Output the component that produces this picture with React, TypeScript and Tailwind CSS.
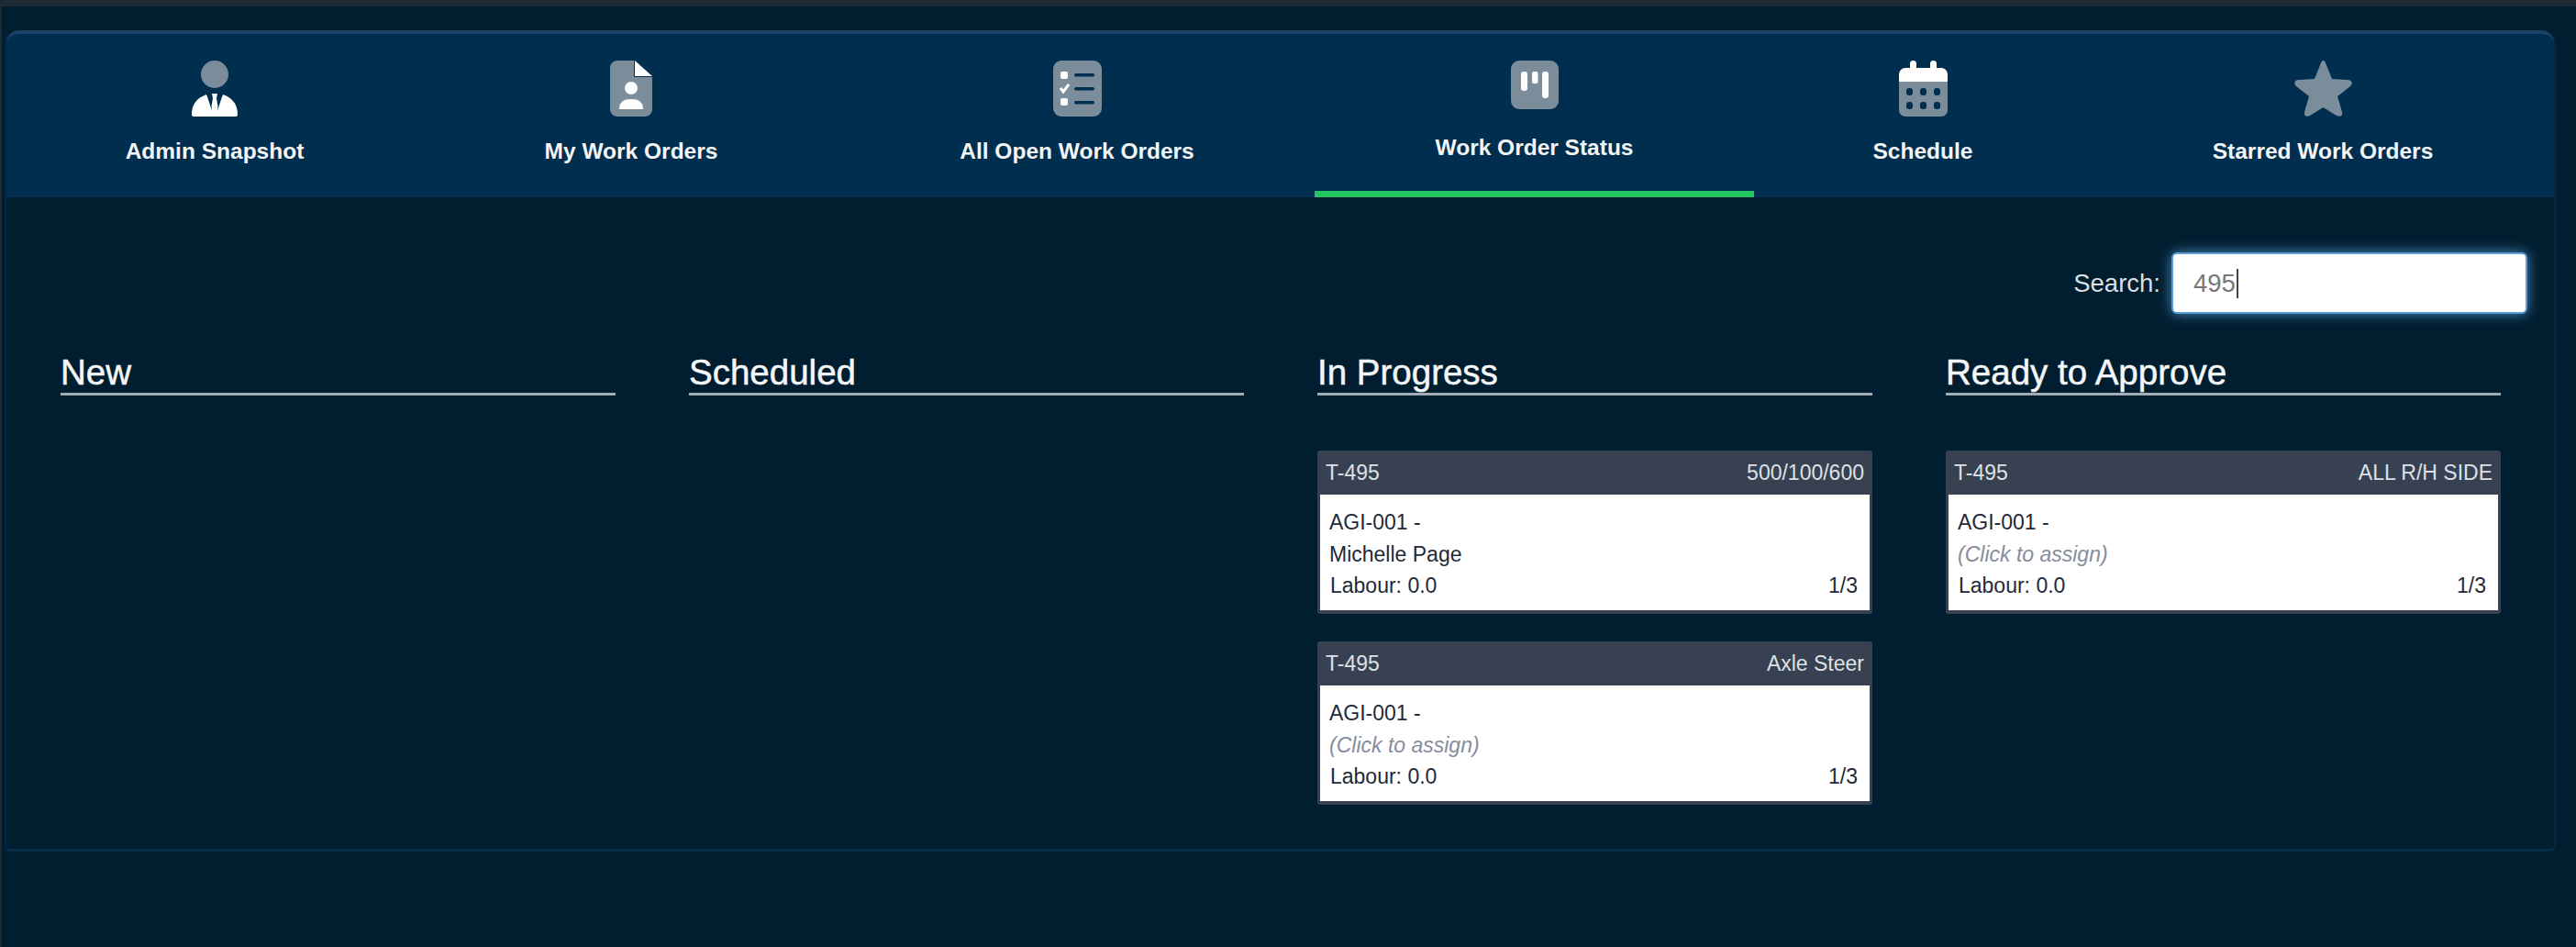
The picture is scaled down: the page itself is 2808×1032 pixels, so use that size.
import React from 'react';

const SLATE = '#7b8c9b';
const NAVY = '#002e4e';

const AdminIcon = () => (
  <svg width="54" height="61" viewBox="0 0 54 61">
    <circle cx="27" cy="15" r="15" fill={SLATE} />
    <path d="M2 59 C2 48 7 41 18 37 L25 52 L25 37 L29 37 L29 52 L36 37 C47 41 52 48 52 59 Q52 61 50 61 H4 Q2 61 2 59 Z" fill="#fff" />
    <path d="M24 36 H30 L29 41 L31 53 L27 58 L23 53 L25 41 Z" fill="#fff" />
    <path d="M18 36 L24 55 L22 36 Z M36 36 L30 55 L32 36 Z" fill={NAVY} />
  </svg>
);

const DocIcon = () => (
  <svg width="46" height="61" viewBox="0 0 46 61">
    <path d="M8 0 H26 V18 H46 V53 A8 8 0 0 1 38 61 H8 A8 8 0 0 1 0 53 V8 A8 8 0 0 1 8 0 Z" fill={SLATE} />
    <path d="M27 0 L46 17 H27 Z" fill="#fff" />
    <circle cx="23" cy="30" r="7" fill="#fff" />
    <path d="M10 53 C10 45 15 42 23 42 C31 42 36 45 36 53 Z" fill="#fff" />
  </svg>
);

const ListIcon = () => (
  <svg width="53" height="61" viewBox="0 0 53 61">
    <rect width="53" height="61" rx="9" fill={SLATE} />
    <rect x="8" y="12" width="8" height="8" rx="2" fill="#fff" />
    <path d="M8 30 L11 34 L17 26" fill="none" stroke="#fff" strokeWidth="3" />
    <rect x="8" y="41" width="8" height="8" rx="2" fill="#fff" />
    <rect x="23" y="14" width="22" height="3.5" rx="1.7" fill={NAVY} />
    <rect x="23" y="29" width="22" height="3.5" rx="1.7" fill={NAVY} />
    <rect x="23" y="44" width="22" height="3.5" rx="1.7" fill={NAVY} />
  </svg>
);

const BoardIcon = () => (
  <svg width="52" height="53" viewBox="0 0 52 53">
    <rect width="52" height="53" rx="9" fill={SLATE} />
    <rect x="11" y="12" width="7" height="21" rx="3" fill="#fff" />
    <rect x="23" y="12" width="6.5" height="13" rx="2" fill="#fff" />
    <rect x="34" y="12" width="7" height="29" rx="3" fill="#fff" />
  </svg>
);

const CalendarIcon = () => (
  <svg width="53" height="61" viewBox="0 0 53 61">
    <path d="M0 23 H53 V54 A7 7 0 0 1 46 61 H7 A7 7 0 0 1 0 54 Z" fill={SLATE} />
    <path d="M0 23 V15 A7 7 0 0 1 7 8 H12 V3.5 A3.5 3.5 0 0 1 19 3.5 V8 H34 V3.5 A3.5 3.5 0 0 1 41 3.5 V8 H46 A7 7 0 0 1 53 15 V23 Z" fill="#fff" />
    {[8, 23, 38].map(x => (
      <React.Fragment key={x}>
        <rect x={x} y="30" width="7" height="8" rx="3" fill={NAVY} />
        <rect x={x} y="45" width="7" height="8" rx="3" fill={NAVY} />
      </React.Fragment>
    ))}
  </svg>
);

const StarIcon = () => (
  <svg width="63" height="61" viewBox="0 0 63 61">
    <path d="M31.5 0 C33 0 34 2 35 5 L41 20 L58 21 C63 21 64 25 61 28 L47 39 L52 56 C53 60 50 62 46 60 L31.5 51 L17 60 C13 62 10 60 11 56 L16 39 L2 28 C-1 25 0 21 5 21 L22 20 L28 5 C29 2 30 0 31.5 0 Z" fill={SLATE} />
  </svg>
);

const tabs = [
  { label: 'Admin Snapshot', icon: <AdminIcon />, width: 'w-[454px]' },
  { label: 'My Work Orders', icon: <DocIcon />, width: 'w-[454px]' },
  { label: 'All Open Work Orders', icon: <ListIcon />, width: 'w-[518px]' },
  { label: 'Work Order Status', icon: <BoardIcon />, width: 'w-[479px]', active: true },
  { label: 'Schedule', icon: <CalendarIcon />, width: 'w-[368px]' },
  { label: 'Starred Work Orders', icon: <StarIcon />, width: 'w-[504px]' },
];

const cols = [
  { title: 'New', cards: [] },
  { title: 'Scheduled', cards: [] },
  {
    title: 'In Progress',
    cards: [
      { tag: '500/100/600', person: 'Michelle Page' },
      { tag: 'Axle Steer' },
    ],
  },
  { title: 'Ready to Approve', cards: [{ tag: 'ALL R/H SIDE' }] },
] as { title: string; cards: { tag: string; person?: string }[] }[];

const Card = ({ tag, person }: { tag: string; person?: string }) => (
  <div className="rounded-[3px] bg-[#374151] px-[3px] pb-[4px] text-[23px]">
    <div className="flex h-[48px] items-center justify-between px-[6px] text-[#dde1e6]">
      <span>T-495</span>
      <span>{tag}</span>
    </div>
    <div className="h-[126px] bg-white px-[10px] pt-[13px] text-[#1f2937] leading-[34.5px]">
      <div>AGI-001 -</div>
      {person ? <div>{person}</div> : <div className="italic text-[#858d9c]">(Click to assign)</div>}
      <div className="flex justify-between px-px">
        <span>Labour: 0.0</span>
        <span className="pr-[2px]">1/3</span>
      </div>
    </div>
  </div>
);

export default function App() {
  return (
    <div className="h-[1032px] w-[2808px] overflow-hidden border-l-[2px] border-[#1e2b33] bg-[#001e30] font-['Liberation_Sans',Arial,sans-serif]">
      <div className="h-[7px] bg-[#1e2b33]" />
      <div className="mt-[26px] ml-[3px] h-[895px] w-[2781px] rounded-t-[14px] rounded-b-[6px] border-x-[2px] border-b-[3px] border-x-[#05263f] border-b-[#072a47] bg-[#001e30]">
        {/* Nav */}
        <div className="flex h-[182px] rounded-t-[14px] border-t-[4px] border-[#1c4367] bg-[#002e4e]">
          {tabs.map(tab => (
            <div
              key={tab.label}
              className={`flex h-[178px] shrink-0 flex-col items-center border-b-[7px] pt-[29px] ${tab.width} ${
                tab.active ? 'border-[#22c55e]' : 'border-transparent'
              }`}
            >
              <div className={`flex items-start ${tab.active ? 'h-[81px]' : 'h-[85px]'}`}>{tab.icon}</div>
              <div className="text-[24.5px] leading-[28px] font-bold text-[#f3f5f7]">{tab.label}</div>
            </div>
          ))}
        </div>

        {/* Search */}
        <div className="mt-[60px] flex h-[67px] items-center justify-end pr-[29px]">
          <label className="mr-[12px] text-[27.5px] text-[#dcdfe2]">Search:</label>
          <div className="flex h-[67px] w-[388px] items-center rounded-[6px] border-[2px] border-[#5a9bd8] bg-white pl-[22px] text-[27.5px] text-[#777] shadow-[0_0_14px_rgba(102,175,233,0.75)]">
            495<span className="ml-px h-[32px] w-[2px] bg-[#444]" />
          </div>
        </div>

        {/* Columns */}
        <div className="mt-[42px] grid grid-cols-[605px_605px_605px_605px] gap-x-[80px] pl-[59px]">
          {cols.map(col => (
            <div key={col.title}>
              <h2 className="h-[47px] border-b-[3px] border-[#a3abb3] text-[38.5px] leading-[44px] text-[#f4f6f8] [-webkit-text-stroke:0.5px_#f4f6f8]">{col.title}</h2>
              <div className="mt-[60px] flex flex-col gap-[30px]">
                {col.cards.map(card => (
                  <Card key={card.tag} tag={card.tag} person={card.person} />
                ))}
              </div>
            </div>
          ))}
        </div>
      </div>
    </div>
  );
}
